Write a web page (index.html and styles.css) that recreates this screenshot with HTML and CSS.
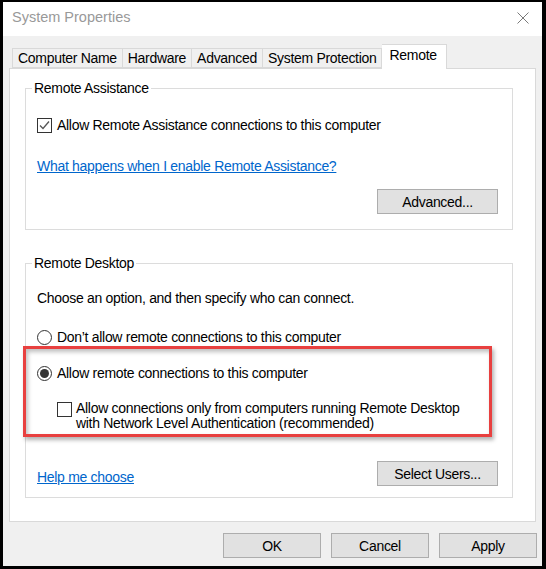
FILE: index.html
```html
<!DOCTYPE html>
<html lang="en">
  <head>
    <meta charset="UTF-8" />
    <meta name="viewport" content="width=device-width, initial-scale=1.0" />
    <title>System Properties</title>
    <link rel="stylesheet" href="styles.css">
  </head>
  <body>
    <div class="window">
      <header class="titlebar">
        <span class="title">System Properties</span>
        <svg class="close" width="12" height="12" viewBox="0 0 12 12">
          <path d="M0.5 0.5L11.5 11.5M11.5 0.5L0.5 11.5" stroke="#7a7a7a" stroke-width="1" fill="none" />
        </svg>
      </header>
      <main class="body">
        <nav class="tabs">
          <div class="tab">Computer Name</div>
          <div class="tab">Hardware</div>
          <div class="tab">Advanced</div>
          <div class="tab">System Protection</div>
          <div class="tab active">Remote</div>
        </nav>
        <section class="panel">
          <fieldset class="group assist">
            <legend>Remote Assistance</legend>
            <label class="option first">
              <span class="check">
                <svg width="13" height="13" viewBox="0 0 13 13">
                  <path d="M2 6.5L5 9.5L11 2.5" stroke="#555" stroke-width="1.3" fill="none" />
                </svg>
              </span>
              Allow Remote Assistance connections to this computer
            </label>
            <a class="link info-link" href="#">What happens when I enable Remote Assistance?</a>
            <div class="group-actions">
              <button class="btn">Advanced...</button>
            </div>
          </fieldset>

          <fieldset class="group desktop">
            <legend>Remote Desktop</legend>
            <p class="hint">Choose an option, and then specify who can connect.</p>
            <label class="option deny">
              <span class="radio"></span>
              Don’t allow remote connections to this computer
            </label>
            <div class="highlight">
              <label class="option">
                <span class="radio selected"></span>
                Allow remote connections to this computer
              </label>
              <label class="option nla">
                <span class="check"></span>
                <span>Allow connections only from computers running Remote Desktop<br>with Network Level Authentication (recommended)</span>
              </label>
            </div>
            <div class="group-footer">
              <a class="link help-link" href="#">Help me choose</a>
              <button class="btn">Select Users...</button>
            </div>
          </fieldset>
        </section>
        <div class="dialog-buttons">
          <button class="btn">OK</button>
          <button class="btn">Cancel</button>
          <button class="btn">Apply</button>
        </div>
      </main>
    </div>
  </body>
</html>
```

FILE: styles.css
```css
* {
  margin: 0;
  padding: 0;
  box-sizing: border-box;
}

body {
  width: 546px;
  height: 569px;
  background-color: #000;
  font-family: "Liberation Sans", Arial, sans-serif;
  font-size: 14px;
  letter-spacing: -0.3px;
  color: #000;
  overflow: hidden;
}

.window {
  width: 546px;
  height: 569px;
  border-style: solid;
  border-color: #000;
  border-width: 2px 4px 3px 3px;
  background-color: #f0f0f0;
  display: flex;
  flex-direction: column;
}

/* title bar */
.titlebar {
  height: 34px;
  background-color: #fff;
  display: flex;
  align-items: center;
  justify-content: space-between;
  padding: 0 13px 5px 9px;
}

.title {
  font-size: 14.5px;
  letter-spacing: 0;
  color: #999;
}

.close {
  margin-top: 3px;
}

/* tabs */
.body {
  flex: 1;
  display: flex;
  flex-direction: column;
  padding: 8px 6px 0 6px;
}

.tabs {
  display: flex;
  align-items: flex-end;
  height: 24px;
  margin-left: 3px;
  position: relative;
  z-index: 1;
}

.tab {
  height: 20px;
  line-height: 19px;
  padding: 0 5px;
  border: 1px solid #d9d9d9;
  border-right: none;
  background-color: #f0f0f0;
}

.tab:nth-child(4) {
  border-right: 1px solid #d9d9d9;
}

.tab.active {
  height: 25px;
  margin-bottom: -1px;
  padding: 0 9px 0 7px;
  border-bottom: none;
  border-left: none;
  border-right: 1px solid #d9d9d9;
  background-color: #fff;
  line-height: 20px;
}

.panel {
  height: 454px;
  border: 1px solid #d9d9d9;
  background-color: #fff;
  padding-top: 11px;
}

/* group boxes */
.group {
  margin: 0 22px 0 15px;
  padding: 0 14px 15px 11px;
  border: 1px solid #dcdcdc;
}

.group legend {
  margin-left: -5px;
  padding: 0 2px;
  line-height: 16px;
}

.group.desktop {
  margin-top: 25px;
  padding-bottom: 11px;
}

.option {
  display: flex;
  align-items: center;
  gap: 5px;
  line-height: 16px;
}

.option.first {
  margin-top: 21px;
}

.check {
  width: 15px;
  height: 15px;
  border: 1px solid #333;
  background-color: #fff;
  display: flex;
  align-items: center;
  justify-content: center;
  flex-shrink: 0;
}

.radio {
  width: 15px;
  height: 15px;
  border: 1px solid #333;
  border-radius: 50%;
  background-color: #fff;
  display: flex;
  align-items: center;
  justify-content: center;
  flex-shrink: 0;
}

.radio.selected::after {
  content: "";
  width: 9px;
  height: 9px;
  border-radius: 50%;
  background-color: #333;
}

.link {
  color: #0066cc;
  text-decoration: underline;
  line-height: 16px;
}

.info-link {
  display: inline-block;
  margin-top: 25px;
}

.group-actions {
  display: flex;
  justify-content: flex-end;
  margin-top: 15px;
}

.btn {
  width: 121px;
  height: 25px;
  border: 1px solid #adadad;
  background-color: #e1e1e1;
  font-family: inherit;
  font-size: 14px;
  letter-spacing: inherit;
  color: #000;
}

.hint {
  margin-top: 19px;
  line-height: 16px;
}

.option.deny {
  margin-top: 23px;
}

/* red marker drawn around the two allow options */
.highlight {
  margin: 1px 6px 0 -14px;
  padding: 16px 0 3px 11px;
  border: 3px solid #e8403f;
  box-shadow: 2px 3px 4px rgba(0, 0, 0, 0.3), inset 2px 3px 4px rgba(0, 0, 0, 0.25);
}

.option.nla {
  margin-top: 20px;
  padding-left: 20px;
  align-items: flex-start;
  gap: 4px;
  line-height: 15px;
}

.option.nla .check {
  margin-top: 1px;
}

.group-footer {
  display: flex;
  justify-content: space-between;
  align-items: center;
  margin-top: 24px;
}

.help-link {
  margin-top: 6px;
}

/* dialog buttons */
.dialog-buttons {
  display: flex;
  justify-content: flex-end;
  gap: 10px;
  margin-top: 11px;
  margin-right: -1px;
}

.dialog-buttons .btn {
  width: 98px;
}
```
